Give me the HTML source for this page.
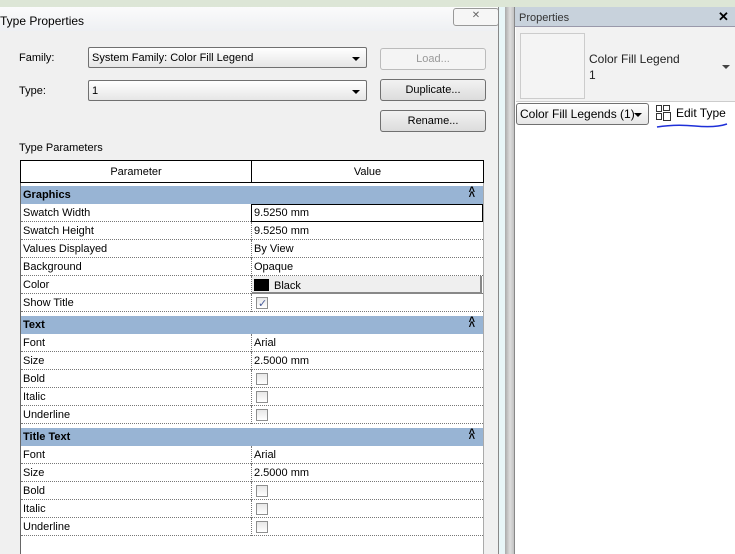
<!DOCTYPE html>
<html><head><style>
*{margin:0;padding:0;box-sizing:border-box}
body{width:735px;height:554px;overflow:hidden;background:#f0f0f0;font-family:"Liberation Sans",sans-serif;font-size:11px;color:#000;position:relative}
.a{position:absolute}
.btn{position:absolute;border:1px solid #707070;border-radius:3px;background:linear-gradient(#f2f2f2,#dcdcdc);text-align:center;line-height:20px;font-size:11px}
.cb{position:absolute;border:1px solid #707070;border-radius:2px;background:linear-gradient(#fff,#e6e6e6);line-height:20px;padding-left:3px}
.cb:after{content:"";position:absolute;right:6px;top:9px;border-left:4px solid transparent;border-right:4px solid transparent;border-top:4px solid #000}
.row{position:absolute;left:21px;width:462px;height:18px;border-bottom:1px dotted #777;line-height:19px}
.row .p{position:absolute;left:2px}
.row .v{position:absolute;left:233px}
.row .d{position:absolute;left:230px;top:0;height:18px;border-left:1px dotted #777}
.grp{position:absolute;left:21px;width:462px;height:18px;background:#98b4d4;font-weight:bold;line-height:19px;padding-left:2px}
.grp:after{content:"\02C4";position:absolute;right:8px;top:-1px;font-size:11px;font-weight:bold;line-height:10px}
.grp:before{content:"\02C4";position:absolute;right:8px;top:4px;font-size:11px;font-weight:bold;line-height:10px}
.chk{position:absolute;left:235px;top:3px;width:12px;height:12px;border:1px solid #8e8f8f;background:linear-gradient(#e8e8e8,#fff)}
</style></head><body>
<div class="a" style="left:0;top:0;width:735px;height:7px;background:#dde6d6"></div>
<div class="a" style="left:0;top:7px;width:498px;height:547px;background:#f0f0f0"></div>
<div class="a" style="left:0;top:7px;width:498px;height:24px;background:linear-gradient(#fbfbfb,#eef0f3)"></div>
<div class="a" style="left:0;top:14px;font-size:12px">Type Properties</div>
<div class="a" style="left:453px;top:8px;width:46px;height:18px;border:1px solid #999;border-radius:3px;background:#f6f6f6;text-align:center;font-size:10px;color:#666;line-height:14px">&#x2715;</div>
<div class="a" style="left:498px;top:7px;width:1px;height:547px;background:#888"></div>
<div class="a" style="left:499px;top:7px;width:6px;height:547px;background:#e8f6f8"></div>
<div class="a" style="left:505px;top:7px;width:10px;height:547px;background:linear-gradient(90deg,#aaa,#ddd,#bbb)"></div>

<div class="a" style="left:19px;top:52px">Family:</div>
<div class="a" style="left:19px;top:85px">Type:</div>
<div class="cb" style="left:88px;top:47px;width:279px;height:21px">System Family: Color Fill Legend</div>
<div class="cb" style="left:88px;top:80px;width:279px;height:21px">1</div>
<div class="btn" style="left:380px;top:48px;width:106px;height:22px;color:#999;border-color:#bbb;background:#f4f4f4">Load...</div>
<div class="btn" style="left:380px;top:79px;width:106px;height:22px">Duplicate...</div>
<div class="btn" style="left:380px;top:110px;width:106px;height:22px">Rename...</div>
<div class="a" style="left:19px;top:142px">Type Parameters</div>

<div class="a" style="left:20px;top:160px;width:464px;height:394px;background:#fff;border-left:1px solid #666;border-right:1px solid #aaa"></div>
<div class="a" style="left:20px;top:160px;width:464px;height:23px;border:1px solid #000;background:#fff"></div>
<div class="a" style="left:251px;top:161px;width:1px;height:21px;background:#000"></div>
<div class="a" style="left:21px;top:166px;width:230px;text-align:center">Parameter</div>
<div class="a" style="left:252px;top:166px;width:231px;text-align:center">Value</div>

<div class="grp" style="top:186px">Graphics</div>
<div class="row" style="top:204px"><span class="p">Swatch Width</span><span class="d"></span><div class="a" style="left:230px;top:0;width:232px;height:18px;border:1px solid #000"></div><span class="v">9.5250 mm</span></div>
<div class="row" style="top:222px"><span class="p">Swatch Height</span><span class="d"></span><span class="v">9.5250 mm</span></div>
<div class="row" style="top:240px"><span class="p">Values Displayed</span><span class="d"></span><span class="v">By View</span></div>
<div class="row" style="top:258px"><span class="p">Background</span><span class="d"></span><span class="v">Opaque</span></div>
<div class="row" style="top:276px"><span class="p">Color</span><span class="d"></span><div class="a" style="left:231px;top:0;width:230px;height:18px;background:#efefef;border-right:2px solid #888;border-bottom:2px solid #888"></div><div class="a" style="left:233px;top:3px;width:15px;height:12px;background:#000"></div><span class="v" style="left:253px;top:1px">Black</span></div>
<div class="row" style="top:294px"><span class="p">Show Title</span><span class="d"></span><span class="chk"><span class="a" style="left:1px;top:-3px;color:#4a5d9a;font-size:11px">&#x2713;</span></span></div>

<div class="grp" style="top:316px">Text</div>
<div class="row" style="top:334px"><span class="p">Font</span><span class="d"></span><span class="v">Arial</span></div>
<div class="row" style="top:352px"><span class="p">Size</span><span class="d"></span><span class="v">2.5000 mm</span></div>
<div class="row" style="top:370px"><span class="p">Bold</span><span class="d"></span><span class="chk"></span></div>
<div class="row" style="top:388px"><span class="p">Italic</span><span class="d"></span><span class="chk"></span></div>
<div class="row" style="top:406px"><span class="p">Underline</span><span class="d"></span><span class="chk"></span></div>

<div class="grp" style="top:428px">Title Text</div>
<div class="row" style="top:446px"><span class="p">Font</span><span class="d"></span><span class="v">Arial</span></div>
<div class="row" style="top:464px"><span class="p">Size</span><span class="d"></span><span class="v">2.5000 mm</span></div>
<div class="row" style="top:482px"><span class="p">Bold</span><span class="d"></span><span class="chk"></span></div>
<div class="row" style="top:500px"><span class="p">Italic</span><span class="d"></span><span class="chk"></span></div>
<div class="row" style="top:518px"><span class="p">Underline</span><span class="d"></span><span class="chk"></span></div>

<!-- right panel -->
<div class="a" style="left:514px;top:7px;width:221px;height:547px;background:#fff;border-left:1px solid #888"></div>
<div class="a" style="left:515px;top:7px;width:220px;height:20px;background:#c8d2dc;border-bottom:1px solid #99a"></div>
<div class="a" style="left:519px;top:12px;color:#333">Properties</div>
<div class="a" style="left:718px;top:9px;font-size:13px;font-weight:bold">&#x2715;</div>
<div class="a" style="left:516px;top:27px;width:219px;height:75px;background:#f2f2f2;border-bottom:1px solid #ccc"></div>
<div class="a" style="left:520px;top:33px;width:65px;height:66px;border:1px solid #ccc;background:#f4f4f4"></div>
<div class="a" style="left:589px;top:52px;font-size:12px;color:#222">Color Fill Legend</div>
<div class="a" style="left:589px;top:68px;font-size:12px;color:#222">1</div>
<div class="a" style="left:722px;top:65px;border-left:4px solid transparent;border-right:4px solid transparent;border-top:4px solid #444"></div>
<div class="cb" style="left:516px;top:103px;width:133px;height:22px;font-size:12px;line-height:21px;border-radius:3px">Color Fill Legends (1)</div>
<svg class="a" style="left:655px;top:104px" width="18" height="18" viewBox="0 0 18 18"><g fill="none" stroke="#333" stroke-width="1"><rect x="1.5" y="1.5" width="5" height="6"/><rect x="1.5" y="9.5" width="5" height="6"/><rect x="8.5" y="1.5" width="6" height="5"/><rect x="8.5" y="8.5" width="7" height="8"/></g></svg>
<div class="a" style="left:676px;top:106px;font-size:12px">Edit Type</div>
<svg class="a" style="left:655px;top:122px" width="75" height="8"><path d="M2 5 Q20 2 40 4 T72 2" stroke="#1e2fd8" stroke-width="1.5" fill="none"/></svg>
</body></html>
